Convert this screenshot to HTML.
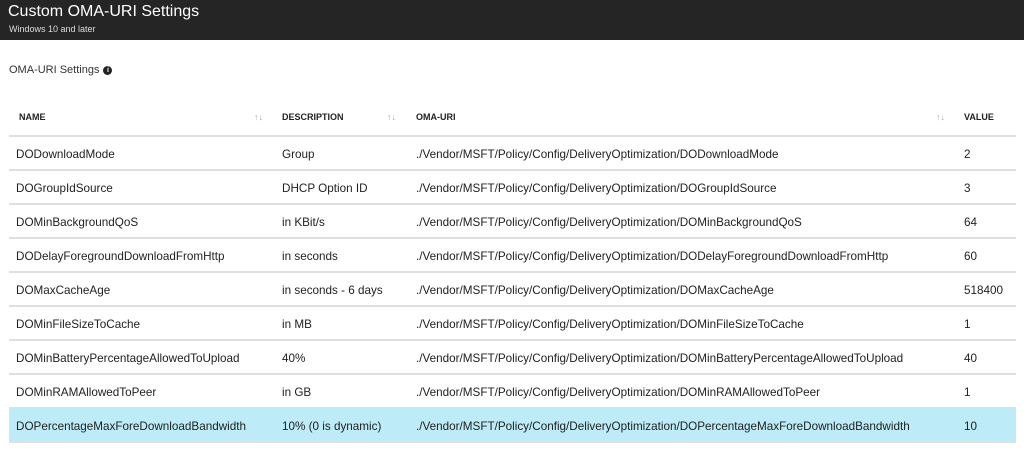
<!DOCTYPE html>
<html><head><style>
body{margin:0;width:1024px;height:453px;background:#fff;font-family:"Liberation Sans",sans-serif;color:#222;overflow:hidden;position:relative}
.hdr{position:absolute;left:0;top:0;width:1024px;height:40px;background:#252525;color:#fff}
.t{position:absolute;left:8px;top:3px;font-size:16px}
.s{position:absolute;left:9px;top:24px;font-size:9px;color:#ddd}
.sec{position:absolute;left:9px;top:64px;font-size:11px;color:#333}
.info{display:inline-block;width:9px;height:9px;border-radius:50%;background:#222;color:#fff;font-size:7px;text-align:center;line-height:9px;font-weight:bold;vertical-align:1px;margin-left:4px}
.row{position:absolute;left:9px;width:1007px;height:33px;border-bottom:2px solid #e0e0e0;font-size:11.7px}
.row span{position:absolute;top:12px;white-space:nowrap}
.h span{font-weight:bold;font-size:9px;top:10px}
.ar{color:#aaa;font-size:8px;font-weight:normal!important}
.sel{background:#bdebf7}
</style></head><body>
<div class="hdr"><div class="t">Custom OMA-URI Settings</div><div class="s">Windows 10 and later</div></div>
<div class="sec">OMA-URI Settings<span class="info">i</span></div>
<div class="row h" style="top:102px"><span style="left:10px">NAME</span><span class="ar" style="left:245px">↑↓</span><span style="left:273px">DESCRIPTION</span><span class="ar" style="left:378px">↑↓</span><span style="left:407px">OMA-URI</span><span class="ar" style="left:927px">↑↓</span><span style="left:955px">VALUE</span></div>
<div class="row" style="top:136px"><span style="left:7px">DODownloadMode</span><span style="left:273px">Group</span><span style="left:407px">./Vendor/MSFT/Policy/Config/DeliveryOptimization/DODownloadMode</span><span style="left:955px">2</span></div>
<div class="row" style="top:170px"><span style="left:7px">DOGroupIdSource</span><span style="left:273px">DHCP Option ID</span><span style="left:407px">./Vendor/MSFT/Policy/Config/DeliveryOptimization/DOGroupIdSource</span><span style="left:955px">3</span></div>
<div class="row" style="top:204px"><span style="left:7px">DOMinBackgroundQoS</span><span style="left:273px">in KBit/s</span><span style="left:407px">./Vendor/MSFT/Policy/Config/DeliveryOptimization/DOMinBackgroundQoS</span><span style="left:955px">64</span></div>
<div class="row" style="top:238px"><span style="left:7px">DODelayForegroundDownloadFromHttp</span><span style="left:273px">in seconds</span><span style="left:407px">./Vendor/MSFT/Policy/Config/DeliveryOptimization/DODelayForegroundDownloadFromHttp</span><span style="left:955px">60</span></div>
<div class="row" style="top:272px"><span style="left:7px">DOMaxCacheAge</span><span style="left:273px">in seconds - 6 days</span><span style="left:407px">./Vendor/MSFT/Policy/Config/DeliveryOptimization/DOMaxCacheAge</span><span style="left:955px">518400</span></div>
<div class="row" style="top:306px"><span style="left:7px">DOMinFileSizeToCache</span><span style="left:273px">in MB</span><span style="left:407px">./Vendor/MSFT/Policy/Config/DeliveryOptimization/DOMinFileSizeToCache</span><span style="left:955px">1</span></div>
<div class="row" style="top:340px"><span style="left:7px">DOMinBatteryPercentageAllowedToUpload</span><span style="left:273px">40%</span><span style="left:407px">./Vendor/MSFT/Policy/Config/DeliveryOptimization/DOMinBatteryPercentageAllowedToUpload</span><span style="left:955px">40</span></div>
<div class="row" style="top:374px"><span style="left:7px">DOMinRAMAllowedToPeer</span><span style="left:273px">in GB</span><span style="left:407px">./Vendor/MSFT/Policy/Config/DeliveryOptimization/DOMinRAMAllowedToPeer</span><span style="left:955px">1</span></div>
<div class="row sel" style="top:408px"><span style="left:7px">DOPercentageMaxForeDownloadBandwidth</span><span style="left:273px">10% (0 is dynamic)</span><span style="left:407px">./Vendor/MSFT/Policy/Config/DeliveryOptimization/DOPercentageMaxForeDownloadBandwidth</span><span style="left:955px">10</span></div>
</body></html>
